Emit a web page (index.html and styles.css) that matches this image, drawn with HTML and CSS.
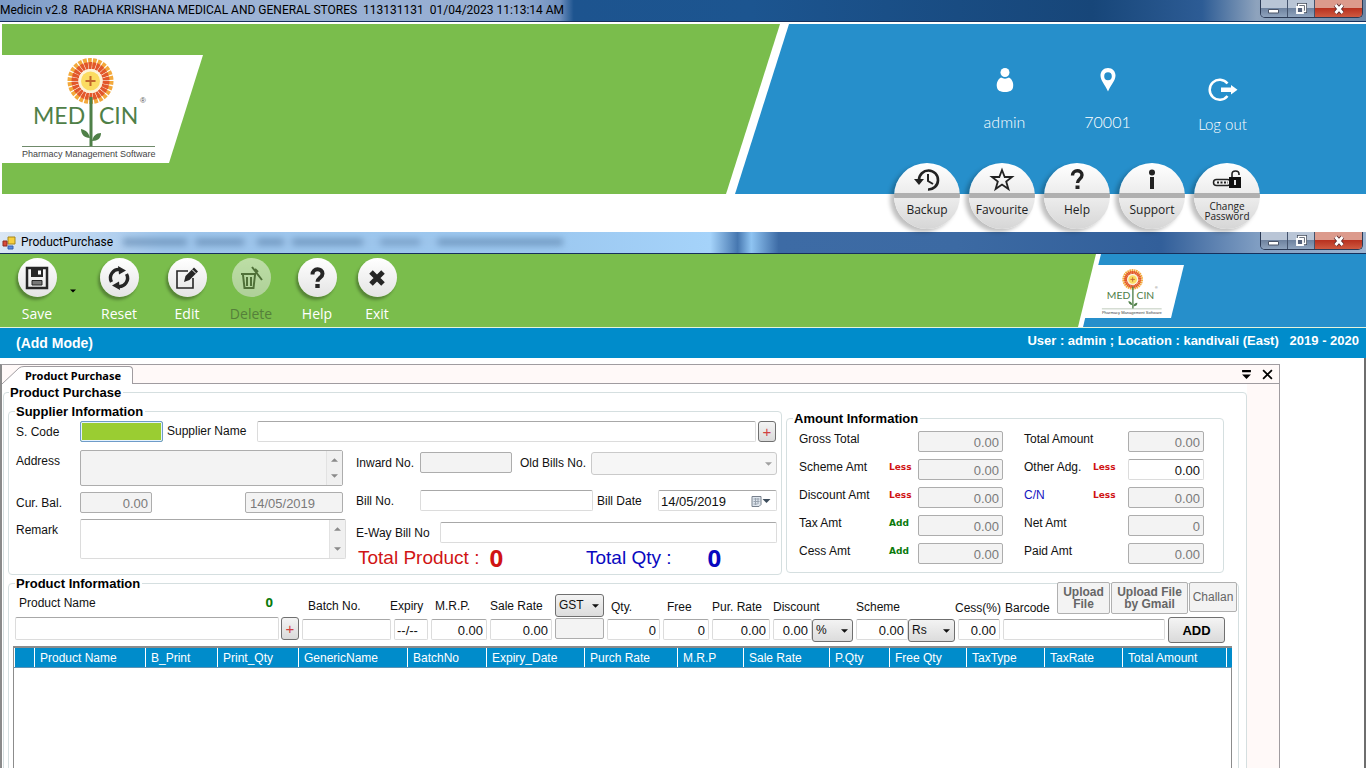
FILE: index.html
```html
<!DOCTYPE html>
<html lang="en">
<head>
  <meta charset="UTF-8" />
  <meta name="viewport" content="width=device-width, initial-scale=1.0" />
  <title>Medicin v2.8</title>
  <link rel="stylesheet" href="styles.css">
</head>
<body>
  <svg class="defs" aria-hidden="true">
    <symbol id="logo" viewBox="18 2 138 104">
      <circle cx="88.500" cy="26" r="19" fill="none" stroke="#f3a93c" stroke-width="8" pathLength="52" stroke-dasharray="1.500 .5" />
      <circle cx="88.500" cy="26" r="15.500" fill="none" stroke="#e2572b" stroke-width="7" pathLength="52" stroke-dasharray="1.700 .3" />
      <circle cx="88.500" cy="26" r="12" fill="#fdf3d8" />
      <circle cx="88.500" cy="26" r="9.500" fill="#fbdc62" />
      <path d="M88.500 21v10M83.500 26h10" stroke="#c3682a" stroke-width="2" />
      <path d="M89 42v49" stroke="#4f8048" stroke-width="3" />
      <path d="M88 83c-1-5-4-8-9-9c0 5 3 9 9 9zM90 86c6 0 9-3 9-8c-5 0-8 3-9 8z" fill="#4f8048" />
      <path d="M20 91.500h133" stroke="#6f8a6a" stroke-width="1" />
      <text class="logo-name" x="31" y="69">MED</text>
      <text class="logo-name" x="97" y="69">CIN</text>
      <text class="logo-reg" x="138" y="48">®</text>
      <text class="logo-tag" x="20" y="102">Pharmacy Management Software</text>
    </symbol>
    <symbol id="arrow-down" viewBox="0 0 8 4"><path d="M0 0h8L4 4z" fill="currentColor" /></symbol>
    <symbol id="arrow-up" viewBox="0 0 8 4"><path d="M0 4h8L4 0z" fill="currentColor" /></symbol>
    <symbol id="win-restore" viewBox="0 0 14 12">
      <path d="M4.500 1.500h7v7h-7z" fill="none" stroke="#3c4656" stroke-width="3" />
      <path d="M4.500 1.500h7v7h-7z" fill="none" stroke="#fff" stroke-width="1.500" />
      <path d="M3 4h6v6H3z" fill="#55617a" stroke="#fff" stroke-width="1.800" />
    </symbol>
    <symbol id="win-min" viewBox="0 0 14 12"><path d="M1.500 6.500h10v3.500h-10z" fill="#fff" stroke="#4a5468" /></symbol>
    <symbol id="win-close" viewBox="0 0 14 12">
      <path d="M3.500 2l7 8M10.500 2l-7 8" stroke="#5c2a2c" stroke-width="4.500" />
      <path d="M3.500 2l7 8M10.500 2l-7 8" stroke="#fff" stroke-width="2.800" />
    </symbol>
  </svg>

  <header class="titlebar titlebar-main">
    <span class="titlebar-text">Medicin v2.8&nbsp; RADHA KRISHANA MEDICAL AND GENERAL STORES&nbsp; 113131131&nbsp; 01/04/2023 11:13:14 AM</span>
    <div class="win-controls">
      <button class="win-btn" aria-label="Minimize"><svg><use href="#win-min" /></svg></button>
      <button class="win-btn" aria-label="Restore"><svg><use href="#win-restore" /></svg></button>
      <button class="win-btn win-btn-close" aria-label="Close"><svg><use href="#win-close" /></svg></button>
    </div>
  </header>

  <section class="app-header">
    <div class="banner">
      <div class="banner-edge">
        <div class="banner-green">
          <div class="logo-plate"><svg class="logo" role="img" aria-label="Medicin"><use href="#logo" /></svg></div>
        </div>
      </div>
      <div class="account">
        <div class="account-item">
          <svg viewBox="0 0 24 24"><circle cx="12" cy="4.500" r="4.500" fill="#fff" /><path d="M8 9.500c2.500 1.500 5.500 1.500 8 0c3 1.500 5 5.500 4 10c-.5 3-3.500 4.500-8 4.500s-7.500-1.500-8-4.500c-1-4.500 1-8.500 4-10z" fill="#fff" /></svg>
          <span>admin</span>
        </div>
        <div class="account-item">
          <svg viewBox="0 0 24 24"><path d="M12 0c-4.500 0-7.500 3.400-7.500 7.600C4.500 12.500 9 17 12 23.500c3-6.500 7.500-11 7.500-15.900C19.500 3.400 16.500 0 12 0zm0 4.200a3.800 4 0 110 8a3.800 4 0 010-8z" fill="#fff" fill-rule="evenodd" /></svg>
          <span>70001</span>
        </div>
        <a class="account-item account-logout" href="#">
          <svg class="wide" viewBox="0 0 30 24"><path d="M19.500 5.500a10 10 0 100 12.500" fill="none" stroke="#fff" stroke-width="2.500" /><path d="M13 9.500h10V7l6.500 4.800L23 16.500V14H13z" fill="#fff" /></svg>
          <span>Log out</span>
        </a>
      </div>
    </div>
    <nav class="shortcuts">
      <button class="shortcut">
        <svg viewBox="0 0 26 26"><path d="M5 13a9.500 9.500 0 119 9.500" fill="none" stroke="#222" stroke-width="2.600" /><path d="M0 12h10l-5 6z" fill="#222" /><path d="M14 7v7l5 3" fill="none" stroke="#222" stroke-width="2" /></svg>
        <span>Backup</span>
      </button>
      <button class="shortcut">
        <svg viewBox="0 0 26 26"><path d="M13 3l2.700 7H23l-5.800 4.500L19.400 22L13 17.500L6.600 22l2.200-7.500L3 10h7.300z" fill="none" stroke="#222" stroke-width="1.800" /></svg>
        <span>Favourite</span>
      </button>
      <button class="shortcut">
        <svg viewBox="0 0 26 26"><path d="M8.500 8.500c0-6.500 9.500-6 9.500-.5c0 4-4.500 4-4.500 8" fill="none" stroke="#222" stroke-width="3.400" /><path d="M11.500 18.500h4v3.500h-4z" fill="#222" /></svg>
        <span>Help</span>
      </button>
      <button class="shortcut">
        <svg viewBox="0 0 26 26"><circle cx="13" cy="5.500" r="3" fill="#222" /><path d="M11 10h4v12h-4z" fill="#222" /></svg>
        <span>Support</span>
      </button>
      <button class="shortcut shortcut-two">
        <svg class="wide" viewBox="0 0 32 26"><rect x="2.500" y="12.500" width="17" height="6" rx="3" fill="none" stroke="#222" stroke-width="1.500" /><path d="M6 15.500h11" stroke="#222" stroke-width="2" stroke-dasharray="2 1.500" /><path d="M18 10h12v11H18z" fill="#111" /><path d="M21 10V7c0-4 7-4 7 0v1" fill="none" stroke="#222" stroke-width="1.600" /><path d="M24 13v5" stroke="#fff" stroke-width="1.800" /></svg>
        <span>Change<br>Password</span>
      </button>
    </nav>
  </section>

  <header class="titlebar titlebar-child">
    <svg class="form-icon" viewBox="0 0 14 14"><path d="M6 1h7v7H6z" fill="#f7cf3e" stroke="#a5851a" /><path d="M1 5h4v5H1z" fill="#d84a3a" stroke="#8e2b20" /><path d="M6 10h5v3H6z" fill="#5a8be0" stroke="#3560ae" /></svg>
    <span class="titlebar-text">ProductPurchase</span>
    <span class="titlebar-ghost" aria-hidden="true"></span>
    <div class="win-controls">
      <button class="win-btn" aria-label="Minimize"><svg><use href="#win-min" /></svg></button>
      <button class="win-btn" aria-label="Restore"><svg><use href="#win-restore" /></svg></button>
      <button class="win-btn win-btn-close" aria-label="Close"><svg><use href="#win-close" /></svg></button>
    </div>
  </header>

  <div class="toolbar">
    <div class="toolbar-edge">
      <div class="toolbar-green">
        <div class="tools">
          <button class="tool">
            <span class="tool-icon"><svg viewBox="0 0 24 24"><path d="M2 2h20v20H2z" fill="none" stroke="#262626" stroke-width="2.500" /><path d="M6 3h12v8H6z" fill="#262626" /><path d="M13 4.500h3v4h-3z" fill="#fff" /><path d="M7 14.500h10V19H7z" fill="#777" stroke="#262626" /></svg></span>
            <span>Save</span>
          </button>
          <button class="tool-more" aria-label="More save options"><svg><use href="#arrow-down" /></svg></button>
          <button class="tool">
            <span class="tool-icon"><svg viewBox="0 0 24 24"><path d="M4.500 16a8.500 8.500 0 018.500-12.500M19.500 8a8.500 8.500 0 01-8.500 12.500" fill="none" stroke="#262626" stroke-width="3.400" /><path d="M11 0l8 4.500l-7 4zM13 24l-8-4.500l7-4z" fill="#262626" /></svg></span>
            <span>Reset</span>
          </button>
          <button class="tool">
            <span class="tool-icon"><svg viewBox="0 0 24 24"><path d="M13 5H2v17h16V12" fill="none" stroke="#262626" stroke-width="1.600" /><path d="M9 16l1.500-6L19 1.500l4 4L14.500 14z" fill="#262626" /><path d="M17 3.500l4 4" stroke="#fff" stroke-width="1" /></svg></span>
            <span>Edit</span>
          </button>
          <button class="tool" disabled>
            <span class="tool-icon"><svg viewBox="0 0 24 24"><path d="M2 8h15M4 9l1.500 13h9L16 9M8 11v9M12 11v9M13 1l10 13M16 3l3 3" fill="none" stroke="#262626" stroke-width="2" /></svg></span>
            <span>Delete</span>
          </button>
          <button class="tool">
            <span class="tool-icon"><svg viewBox="0 0 24 24"><path d="M7.500 8.500c0-7 10-6.500 10-.8c0 4-5 4-5 8" fill="none" stroke="#262626" stroke-width="4" /><path d="M10.300 18h4.400v4h-4.400z" fill="#262626" /></svg></span>
            <span>Help</span>
          </button>
          <button class="tool">
            <span class="tool-icon"><svg viewBox="0 0 24 24"><path d="M6 6l12 12M18 6L6 18" stroke="#262626" stroke-width="5" /></svg></span>
            <span>Exit</span>
          </button>
        </div>
      </div>
    </div>
    <div class="toolbar-plate"><svg role="img" aria-label="Medicin"><use href="#logo" /></svg></div>
  </div>

  <div class="mode-bar">
    <span class="mode">(Add Mode)</span>
    <span class="session">User : admin ; Location : kandivali (East) &nbsp; 2019 - 2020</span>
  </div>

  <main class="workspace">
    <div class="tab-panel">
      <div class="tab-strip">
        <button class="tab"><svg viewBox="0 0 22 18"><path d="M0 18L17 2q2-1.500 5-1.500V18z" fill="#fff" /><path d="M0 18L17 2q2-1.500 5-1.500" fill="none" stroke="#a09ca0" /></svg><span>Product Purchase</span></button>
        <div class="tab-tools">
          <button aria-label="Window list"><svg viewBox="0 0 10 10"><path d="M1 1h8v2H1zM1 5h8L5 9z" /></svg></button>
          <button aria-label="Close tab"><svg viewBox="0 0 10 10"><path d="M1 1l8 8M9 1L1 9" stroke="#000" stroke-width="1.600" /></svg></button>
        </div>
      </div>

      <form class="tab-body">
        <fieldset class="group group-page">
          <legend>Product Purchase</legend>
          <div class="top-groups">
            <fieldset class="group group-supplier">
              <legend>Supplier Information</legend>
              <div class="code-row">
                <label for="scode">S. Code</label>
                <input class="scode" id="scode" type="text">
                <label for="sname">Supplier Name</label>
                <input class="grow" id="sname" type="text">
                <button type="button" class="plus" aria-label="Add supplier">+</button>
              </div>
              <div class="supplier-cols">
                <div class="supplier-left">
                  <label for="address">Address</label>
                  <div class="memo memo-off">
                    <textarea id="address" disabled></textarea>
                    <span class="memo-scroll"><svg><use href="#arrow-up" /></svg><svg><use href="#arrow-down" /></svg></span>
                  </div>
                  <label for="bal">Cur. Bal.</label>
                  <div class="bal-row">
                    <input class="num bal" id="bal" type="text" value="0.00" disabled>
                    <input class="bal-date" type="text" value="14/05/2019" aria-label="Balance date" disabled>
                  </div>
                  <label for="remark">Remark</label>
                  <div class="memo memo-remark">
                    <textarea id="remark"></textarea>
                    <span class="memo-scroll"><svg><use href="#arrow-up" /></svg><svg><use href="#arrow-down" /></svg></span>
                  </div>
                </div>
                <div class="supplier-right">
                  <div class="bill-row">
                    <label class="bill-label" for="inward">Inward No.</label>
                    <input class="inward" id="inward" type="text" disabled>
                    <label class="old-label" for="oldbills">Old Bills No.</label>
                    <span class="combo combo-off grow"><select id="oldbills" disabled></select><svg><use href="#arrow-down" /></svg></span>
                  </div>
                  <div class="bill-row">
                    <label class="bill-label" for="billno">Bill No.</label>
                    <input class="grow" id="billno" type="text">
                    <label class="date-label" for="billdate">Bill Date</label>
                    <div class="date">
                      <input id="billdate" type="text" value="14/05/2019">
                      <button type="button" aria-label="Pick a date"><svg viewBox="0 0 20 12"><path d="M1.500 1.500h9v8l-2 2h-7z" fill="#dfe6ee" stroke="#77808c" /><path d="M3 4h6M3 6.500h6M3 9h4M5 3v7M7.500 3v6" stroke="#9aa4b0" /><path d="M12 4h8l-4 4z" fill="#3d4d5c" /></svg></button>
                    </div>
                  </div>
                  <div class="bill-row">
                    <label class="eway-label" for="eway">E-Way Bill No</label>
                    <input class="grow" id="eway" type="text">
                  </div>
                  <div class="totals">
                    <span class="total total-product">Total Product : <b>0</b></span>
                    <span class="total total-qty">Total Qty : <b>0</b></span>
                  </div>
                </div>
              </div>
            </fieldset>

            <fieldset class="group group-amount">
              <legend>Amount Information</legend>
              <div class="amounts">
                <label for="gross">Gross Total</label><span></span>
                <input class="num" id="gross" type="text" value="0.00" disabled>
                <label class="second" for="total">Total Amount</label><span></span>
                <input class="num" id="total" type="text" value="0.00" disabled>

                <label for="scheme-amt">Scheme Amt</label><span class="less">Less</span>
                <input class="num" id="scheme-amt" type="text" value="0.00" disabled>
                <label class="second" for="other">Other Adg.</label><span class="less">Less</span>
                <input class="num" id="other" type="text" value="0.00">

                <label for="disc-amt">Discount Amt</label><span class="less">Less</span>
                <input class="num" id="disc-amt" type="text" value="0.00" disabled>
                <label class="second cn" for="cn">C/N</label><span class="less">Less</span>
                <input class="num" id="cn" type="text" value="0.00" disabled>

                <label for="tax-amt">Tax Amt</label><span class="add">Add</span>
                <input class="num" id="tax-amt" type="text" value="0.00" disabled>
                <label class="second" for="net">Net Amt</label><span></span>
                <input class="num" id="net" type="text" value="0" disabled>

                <label for="cess-amt">Cess Amt</label><span class="add">Add</span>
                <input class="num" id="cess-amt" type="text" value="0.00" disabled>
                <label class="second" for="paid">Paid Amt</label><span></span>
                <input class="num" id="paid" type="text" value="0.00" disabled>
              </div>
            </fieldset>
          </div>

          <fieldset class="group group-product">
            <legend>Product Information</legend>
            <div class="entry">
              <div class="field field-product">
                <div class="field-head"><label for="pname">Product Name</label><b>0</b></div>
                <div class="joined">
                  <input class="grow" id="pname" type="text">
                  <button type="button" class="plus" aria-label="Add product">+</button>
                </div>
              </div>
              <div class="field w-batch"><label for="batch">Batch No.</label><input id="batch" type="text"></div>
              <div class="field w-expiry"><label for="expiry">Expiry</label><input id="expiry" type="text" value="--/--"></div>
              <div class="field w-mrp"><label for="mrp">M.R.P.</label><input class="num" id="mrp" type="text" value="0.00"></div>
              <div class="field w-sale"><label for="sale">Sale Rate</label><input class="num" id="sale" type="text" value="0.00"></div>
              <div class="field w-gst">
                <span class="combo combo-gst"><select aria-label="Tax"><option>GST</option></select><svg><use href="#arrow-down" /></svg></span>
                <input type="text" aria-label="Tax value" disabled>
              </div>
              <div class="field w-qty"><label for="qty">Qty.</label><input class="num" id="qty" type="text" value="0"></div>
              <div class="field w-free"><label for="free">Free</label><input class="num" id="free" type="text" value="0"></div>
              <div class="field w-pur"><label for="pur">Pur. Rate</label><input class="num" id="pur" type="text" value="0.00"></div>
              <div class="field w-disc">
                <label for="disc">Discount</label>
                <div class="joined-tight"><input class="num grow" id="disc" type="text" value="0.00"><span class="combo"><select aria-label="Discount unit"><option>%</option></select><svg><use href="#arrow-down" /></svg></span></div>
              </div>
              <div class="field w-scheme">
                <label for="scheme">Scheme</label>
                <div class="joined-tight"><input class="num grow" id="scheme" type="text" value="0.00"><span class="combo combo-rs"><select aria-label="Scheme unit"><option>Rs</option></select><svg><use href="#arrow-down" /></svg></span></div>
              </div>
              <div class="entry-end">
                <div class="end-head">
                  <label for="cess">Cess(%)</label>
                  <label for="barcode">Barcode</label>
                  <div class="uploads">
                    <button type="button" class="upload w-upload" disabled>Upload File</button>
                    <button type="button" class="upload w-gmail" disabled>Upload File by Gmail</button>
                    <button type="button" class="upload challan" disabled>Challan</button>
                  </div>
                </div>
                <div class="end-inputs">
                  <input class="num w-cess" id="cess" type="text" value="0.00">
                  <input class="grow" id="barcode" type="text">
                  <button type="button" class="add-btn">ADD</button>
                </div>
              </div>
            </div>

            <div class="grid-box">
              <table class="grid">
                <colgroup>
                  <col class="c20"><col class="c111"><col class="c72"><col class="c81"><col class="c109"><col class="c79"><col class="c98"><col class="c93"><col class="c66"><col class="c86"><col class="c60"><col class="c77"><col class="c78"><col class="c78"><col class="c104"><col class="c5">
                </colgroup>
                <thead>
                  <tr>
                    <th></th><th>Product Name</th><th>B_Print</th><th>Print_Qty</th><th>GenericName</th><th>BatchNo</th><th>Expiry_Date</th><th>Purch Rate</th><th>M.R.P</th><th>Sale Rate</th><th>P.Qty</th><th>Free Qty</th><th>TaxType</th><th>TaxRate</th><th>Total Amount</th><th></th>
                  </tr>
                </thead>
                <tbody></tbody>
              </table>
            </div>
          </fieldset>
        </fieldset>
      </form>
    </div>
  </main>
</body>
</html>
```
FILE: styles.css
```css
* {
  box-sizing: border-box;
}

body {
  margin: 0;
  height: 100vh;
  overflow: hidden;
  display: flex;
  flex-direction: column;
  background: #fff;
  color: #111;
  font: 12px/15px "Liberation Sans", Arial, sans-serif;
}

button, input, select, textarea {
  font: inherit;
  color: inherit;
  margin: 0;
}

button {
  padding: 0;
  border: none;
  background: none;
}

.defs {
  position: absolute;
  width: 0;
  height: 0;
}

.logo-name {
  font: 23px Lato, sans-serif;
  fill: #4f8048;
  stroke: #4f8048;
  stroke-width: 0;
}

.logo-reg {
  font: 8px "Liberation Sans", sans-serif;
  fill: #555;
}

.logo-tag {
  font: 9px "Liberation Sans", sans-serif;
  fill: #444;
}

/* title bars */
.titlebar {
  flex: none;
  display: flex;
  align-items: flex-start;
  height: 22px;
  overflow: hidden;
  border-bottom: 1px solid #17305c;
  font: 12px/21px Roboto, "Open Sans", sans-serif;
  color: #000;
}

.titlebar-main {
  background: linear-gradient(90deg, #7c9bc8 0, #a0b5d6 12%, #94add2 38%, #6f8fbe 41%, #1d548f 42%, #1c5590 55%, #174679 80%, #2d5c95 88%, #8ea3bd 92%, #6d87a6 100%);
}

.titlebar-child {
  background: linear-gradient(90deg, #dbe7f5 0, #b4d1ef 8%, #9fc6ec 12%, #9cc8f0 40%, #a5d3fa 52%, #4677b0 54%, #8fc4f2 55%, #3d6ba5 57%, #3c6aa3 70%, #325f9a 85%, #7f9dc2 92%, #9db4d0 100%);
}

.titlebar-ghost {
  width: 440px;
  height: 8px;
  margin: 6px 0 0 10px;
  background: linear-gradient(90deg, #5e83ab 0 14%, #9cc2e8 15% 16%, #5e83ab 17% 27%, #9cc2e8 28% 30%, #5e83ab 31% 36%, #9cc2e8 37% 38%, #5e83ab 39% 54%, #9cc2e8 55% 58%, #6a8eb6 59% 67%, #9cc2e8 68% 71%, #5e83ab 72% 100%);
  filter: blur(3px);
  opacity: .6;
}

.form-icon {
  width: 14px;
  height: 14px;
  margin: 4px 5px 0 2px;
}

.win-controls {
  display: flex;
  margin-left: auto;
  margin-right: 3px;
  border: 1px solid #2b3a55;
  border-top: none;
  border-radius: 0 0 5px 5px;
  overflow: hidden;
}

.win-btn {
  width: 27px;
  height: 17px;
  display: flex;
  justify-content: center;
  align-items: center;
  border-right: 1px solid #43526c;
  background: linear-gradient(#b9c5d6 0 45%, #6f83a0 50%, #8fa3bd);
}

.win-btn-close {
  width: 47px;
  border-right: none;
  background: linear-gradient(#dc9a8c 0 45%, #b93220 50%, #cf5a41);
}

.win-btn svg {
  width: 14px;
  height: 12px;
}

/* main banner */
.app-header {
  flex: none;
  padding: 2px 0 0 2px;
  height: 210px;
}

.banner {
  display: flex;
  height: 170px;
  background: #268fcb;
}

.banner-edge {
  flex: 0 0 57.7%;
  background: #fff;
  clip-path: polygon(0 0, 100% 0, calc(100% - 54px) 100%, 0 100%);
}

.banner-green {
  height: 100%;
  padding-top: 31px;
  background: #7abd4c;
  clip-path: polygon(0 0, calc(100% - 9px) 0, calc(100% - 63px) 100%, 0 100%);
}

.logo-plate {
  width: 201px;
  height: 108px;
  padding: 2px 0 0 18px;
  background: #fff;
  clip-path: polygon(0 0, 100% 0, calc(100% - 34px) 100%, 0 100%);
}

.logo {
  width: 138px;
  height: 104px;
}

.account {
  flex: 1;
  display: flex;
  justify-content: flex-end;
  padding: 44px 92px 0 0;
  color: #fff;
  font: 300 16px/20px Lato, "Open Sans", sans-serif;
}

.account-item {
  width: 103px;
  display: flex;
  flex-direction: column;
  align-items: center;
  gap: 20px;
  color: inherit;
  text-decoration: none;
}

.account-item svg {
  width: 24px;
  height: 24px;
}

.account-item .wide {
  width: 30px;
}

.account-logout {
  margin-left: 12px;
  padding-top: 10px;
  gap: 12px;
  font-size: 15px;
}

.shortcuts {
  position: relative;
  display: flex;
  justify-content: flex-end;
  gap: 9px;
  margin-top: -31px;
  padding-right: 106px;
}

.shortcut {
  width: 66px;
  height: 66px;
  display: flex;
  flex-direction: column;
  align-items: center;
  gap: 8px;
  padding-top: 4px;
  border-radius: 50%;
  background: linear-gradient(#fff 0, #ededed 45%, #b0b0b0 45%, #b0b0b0 53%, #ececec 53%, #d6d6d6 100%);
  box-shadow: -4px 3px 4px rgba(0, 0, 0, .25);
  color: #222;
  font: 12px/18px "Open Sans", "Noto Sans", sans-serif;
}

.shortcut svg {
  flex: none;
  width: 26px;
  height: 26px;
}

.shortcut .wide {
  width: 32px;
}

.shortcut-two {
  font-size: 10px;
  line-height: 10px;
}

/* form toolbar */
.toolbar {
  flex: none;
  display: flex;
  align-items: flex-start;
  height: 74px;
  background: #268fcb;
  border-bottom: 1px solid #e6f2dc;
}

.toolbar-edge {
  flex: 0 0 80.6%;
  height: 73px;
  background: #fff;
  clip-path: polygon(0 0, 100% 0, calc(100% - 18px) 100%, 0 100%);
}

.toolbar-green {
  height: 100%;
  background: #7abd4c;
  clip-path: polygon(0 0, calc(100% - 5px) 0, calc(100% - 23px) 100%, 0 100%);
}

.toolbar-plate {
  width: 100px;
  height: 53px;
  margin: 11px 0 0 -17px;
  padding: 2px 0 0 17px;
  background: #fff;
  clip-path: polygon(13px 0, 100% 0, calc(100% - 13px) 100%, 0 100%);
}

.toolbar-plate svg {
  width: 62px;
  height: 50px;
}

.tools {
  display: grid;
  grid-template-columns: 66px 14px 70px 66px 62px 70px 50px;
  margin-left: 4px;
  padding-top: 4px;
  color: #fff;
  font: 14px/20px "Open Sans", "Noto Sans", sans-serif;
}

.tool {
  display: flex;
  flex-direction: column;
  align-items: center;
  gap: 7px;
}

.tool:disabled {
  color: #55803a;
}

.tool-icon {
  width: 39px;
  height: 39px;
  display: flex;
  justify-content: center;
  align-items: center;
  border-radius: 50%;
  background: linear-gradient(#fff, #e4e4e4);
  box-shadow: -2px 3px 3px rgba(0, 0, 0, .3);
}

.tool:disabled .tool-icon {
  opacity: .5;
  box-shadow: none;
}

.tool-icon svg {
  width: 24px;
  height: 24px;
}

.tool-more {
  color: #000;
}

.tool-more svg {
  display: block;
  width: 6px;
  height: 4px;
}

.mode-bar {
  flex: none;
  display: flex;
  justify-content: space-between;
  align-items: flex-start;
  height: 30px;
  padding: 4px 7px 0 16px;
  background: #008ccb;
  color: #fff;
  font: bold 13px/17px "Liberation Sans", Arial, sans-serif;
}

.mode {
  padding-top: 3px;
  font-size: 14px;
}

/* workspace */
.workspace {
  flex: 1;
  min-height: 0;
  overflow: hidden;
  padding: 6px 84px 0 0;
  border-right: 2px solid #6e6e6e;
}

.tab-panel {
  border: 1px solid #a09ca0;
  border-left: 2px solid #8a8a8a;
  background: #fff9f8;
}

.tab-strip {
  display: flex;
  justify-content: space-between;
  align-items: flex-end;
  height: 19px;
  border-bottom: 1px solid #a09ca0;
}

.tab {
  display: flex;
  height: 18px;
  margin-bottom: -1px;
  font: bold 11px/17px "Noto Sans", "Open Sans", sans-serif;
  color: #000;
}

.tab svg {
  width: 22px;
  height: 18px;
}

.tab span {
  height: 18px;
  padding: 0 11px 0 1px;
  border: 1px solid #a09ca0;
  border-width: 1px 1px 0 0;
  border-radius: 0 4px 0 0;
  background: #fff;
}

.tab-tools {
  display: flex;
  gap: 10px;
  align-self: center;
  padding-right: 6px;
}

.tab-tools svg {
  display: block;
  width: 11px;
  height: 11px;
}

.tab-body {
  margin-right: 32px;
  padding: 1px 0 0 1px;
  background: #fff;
}

.group {
  min-width: 0;
  margin: 0;
  padding: 0;
  border: 1px solid #d5dfe0;
  border-radius: 4px;
}

.group > legend {
  margin-left: 6px;
  padding: 0 2px 0 1px;
  font-weight: bold;
  font-size: 13px;
  line-height: 15px;
  color: #000;
}

.group-page {
  padding: 4px 6px 0 4px;
}

.group-page > legend {
  margin-left: 1px;
}

.top-groups {
  display: grid;
  grid-template-columns: 774fr 438fr;
  align-items: start;
  gap: 4px;
  padding-right: 16px;
}

.group-supplier {
  padding: 2px 4px 0 0;
  height: 171px;
}

.group-amount {
  margin-top: 7px;
  padding: 5px 19px 8px 0;
}

input, textarea, .memo, .date {
  border: 1px solid #dcdcdc;
  border-top-color: #a8a8a8;
  border-radius: 2px;
  background: #fff;
}

input {
  height: 21px;
  width: 100%;
  min-width: 0;
  padding: 1px 3px 0 4px;
  font-size: 13px;
}

input:disabled, .memo-off {
  border-color: #adadad;
  background: #f3f3f3;
  color: #7a7a7a;
}

.num {
  text-align: right;
}

.grow {
  flex: 1;
}

.code-row {
  display: flex;
  align-items: center;
  height: 21px;
  padding: 0 1px 0 7px;
}

.code-row label:first-child {
  width: 64px;
  padding-top: 2px;
}

.code-row .scode {
  width: 83px;
  margin-right: 4px;
  border-color: #6f9cc8;
  background: #9acd32;
  box-shadow: inset 0 0 0 1px #e4f2ff;
}

#sname {
  margin-left: 11px;
}

.plus {
  width: 18px;
  height: 21px;
  margin-left: 2px;
  border: 1px solid #707070;
  border-radius: 3px;
  background: linear-gradient(#f4f4f4, #dadada);
  color: #d04040;
  font-size: 15px;
}

.supplier-cols {
  display: grid;
  grid-template-columns: 330px 1fr;
  gap: 10px;
  margin-top: 8px;
  padding-left: 7px;
}

.supplier-left {
  display: grid;
  grid-template-columns: 64px 1fr;
  grid-template-rows: 36px 21px 40px;
  row-gap: 6px;
}

.supplier-left label {
  padding-top: 4px;
}

.memo {
  display: flex;
  margin-right: 3px;
}

.memo textarea {
  flex: 1;
  width: 0;
  border: none;
  background: none;
  resize: none;
}

.memo-remark {
  margin-right: 0;
}

.memo-scroll {
  display: flex;
  flex-direction: column;
  justify-content: space-between;
  align-items: center;
  width: 16px;
  padding: 7px 0;
  border-left: 1px solid #e2e2e2;
  background: #f0f0f0;
  color: #8a8a8a;
}

.memo-scroll svg {
  width: 7px;
  height: 4px;
}

.bal-row {
  display: flex;
  justify-content: space-between;
  padding-right: 3px;
}

.bal-row .bal {
  width: 72px;
}

.bal-row .bal-date {
  width: 98px;
}

.supplier-right {
  display: grid;
  grid-template-rows: 38px 32px 22px 28px;
  padding-top: 2px;
}

.bill-row {
  display: flex;
  align-items: flex-start;
}

.bill-row label {
  flex: none;
  padding-top: 4px;
}

.bill-label {
  width: 64px;
}

.bill-row .inward {
  width: 92px;
}

.old-label {
  width: 79px;
  padding-left: 8px;
}

.date-label {
  width: 65px;
  padding-left: 4px;
}

.eway-label {
  width: 84px;
}

.date {
  display: flex;
  width: 119px;
  height: 21px;
}

.date input {
  flex: 1;
  height: 19px;
  padding-left: 2px;
  border: none;
}

.date button {
  width: 26px;
}

.date svg {
  display: block;
  width: 21px;
  height: 12px;
}

.combo {
  position: relative;
  display: block;
  width: 41px;
  height: 23px;
}

.combo select {
  width: 100%;
  height: 100%;
  padding: 0 3px;
  border: 1px solid #707070;
  border-radius: 3px;
  background: linear-gradient(#f3f3f3, #dcdcdc);
  appearance: none;
}

.combo svg {
  position: absolute;
  right: 5px;
  top: 10px;
  width: 7px;
  height: 4px;
  pointer-events: none;
}

.combo-off select {
  border-color: #b4b4b4;
  background: #f3f3f3;
}

.combo-off svg {
  color: #a0a0a0;
}

.combo-rs {
  width: 47px;
}

.combo-gst {
  width: 100%;
}

.totals {
  display: grid;
  grid-template-columns: 228px 1fr;
  padding-left: 2px;
}

.total {
  display: flex;
  align-items: center;
  gap: 10px;
  font-size: 19px;
  line-height: 28px;
}

.total b {
  font: bold 24px/28px "Noto Sans", sans-serif;
}

.total-product {
  color: #d01414;
}

.total-qty {
  gap: 36px;
  color: #0808c0;
}

.amounts {
  display: grid;
  grid-template-columns: 1fr 29px 85px 90px 35px 76px;
  row-gap: 7px;
  padding-left: 12px;
}

.amounts label {
  padding-top: 1px;
  white-space: nowrap;
}

.amounts .second {
  padding-left: 21px;
}

.amounts .cn {
  color: #1414c0;
}

.less, .add {
  font: bold 9px/16px "DejaVu Sans", sans-serif;
  color: #d01414;
}

.add {
  color: #0a7a0a;
}

/* product entry line */
.group-product {
  margin-top: 1px;
  margin-right: 1px;
  padding: 0 6px 8px 4px;
}

.group-product > legend {
  margin-left: 2px;
}

.entry {
  position: relative;
  display: flex;
  align-items: flex-end;
  gap: 3px;
  height: 60px;
  margin: -9px -5px 0 0;
  padding-left: 2px;
}

.field {
  display: flex;
  flex-direction: column;
  flex: none;
  gap: 5px;
  height: 48px;
  white-space: nowrap;
}

.field label {
  padding: 5px 0 0 4px;
}

.field-product {
  flex: 1;
  gap: 6px;
}

.field-head {
  display: flex;
  justify-content: space-between;
  padding-right: 26px;
}

.field-head label {
  padding: 2px 0 0 4px;
}

.field-head b {
  font: bold 13px/17px "Noto Sans", sans-serif;
  color: #0a7a0a;
}

.joined, .joined-tight, .end-inputs {
  display: flex;
}

.joined input, .joined .plus {
  height: 23px;
}

.field.w-batch { width: 89px; }
.field.w-expiry { width: 34px; }
.field.w-mrp { width: 56px; }
.field.w-sale { width: 62px; }
.field.w-gst { width: 49px; gap: 1px; }
.field.w-qty { width: 53px; }
.field.w-free { width: 46px; }
.field.w-pur { width: 58px; }
.field.w-disc { width: 80px; }
.field.w-scheme { width: 99px; }

.w-batch label {
  padding-left: 6px;
}

.w-expiry label, .w-sale label, .w-pur label, .w-disc label, .w-scheme label {
  padding-left: 0;
}

.w-expiry label {
  margin-left: -4px;
}

.w-expiry input {
  padding-left: 2px;
}

.w-qty label, .w-free label, .w-pur label, .w-disc label, .w-scheme label {
  padding-top: 6px;
  margin-bottom: -1px;
}

.entry-end {
  flex: none;
  width: 279px;
  height: 60px;
}

.end-head {
  display: flex;
  align-items: flex-end;
  gap: 4px;
  height: 34px;
  margin-left: -3px;
}

.uploads {
  display: flex;
  align-self: flex-start;
  gap: 1px;
  margin-left: auto;
}

.upload {
  height: 32px;
  border: 1px solid #b0b0b0;
  border-radius: 2px;
  background: #f3f3f3;
  color: #666;
  font-weight: bold;
  line-height: 12px;
}

.w-upload { width: 53px; }
.w-gmail { width: 77px; }

.challan {
  width: 48px;
  height: 30px;
  font-weight: normal;
}

.end-inputs {
  gap: 3px;
  margin-top: 3px;
  padding-right: 12px;
}

.end-inputs .w-cess {
  width: 42px;
}

.add-btn {
  width: 57px;
  height: 26px;
  margin-top: -2px;
  border: 1px solid #707070;
  border-radius: 3px;
  background: linear-gradient(#f4f4f4, #dadada);
  font-weight: bold;
  font-size: 13px;
  color: #000;
}

.grid-box {
  min-height: 300px;
  margin-top: 4px;
  border: 1px solid #8c8c8c;
  border-top-width: 2px;
}

.grid {
  width: 100%;
  table-layout: fixed;
  border-collapse: collapse;
  border-left: 1px solid #fff;
}

.grid th {
  height: 19px;
  padding: 2px 0 0 5px;
  border-right: 1px solid #fff;
  border-bottom: 1px solid #5c93b5;
  background: #008ccb;
  color: #fff;
  font-weight: normal;
  text-align: left;
  white-space: nowrap;
}

.grid th:last-child {
  border-right: none;
}

.c5 { width: 5px; }
.c20 { width: 20px; }
.c60 { width: 60px; }
.c66 { width: 66px; }
.c72 { width: 72px; }
.c77 { width: 77px; }
.c78 { width: 78px; }
.c79 { width: 79px; }
.c81 { width: 81px; }
.c86 { width: 86px; }
.c93 { width: 93px; }
.c98 { width: 98px; }
.c104 { width: 104px; }
.c109 { width: 109px; }
.c111 { width: 111px; }
```
